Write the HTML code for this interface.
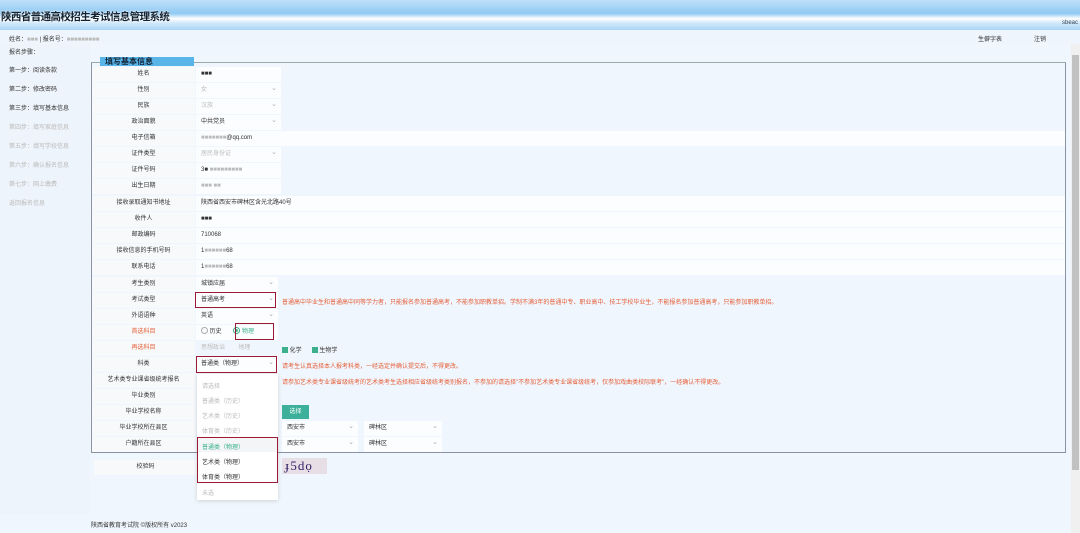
<!DOCTYPE html>
<html><head><meta charset="utf-8"><style>
*{margin:0;padding:0;box-sizing:border-box}
body{width:1080px;height:533px;overflow:hidden;background:#f0f6fd;font-family:"Liberation Sans","Noto Sans CJK SC",sans-serif;font-size:6px;color:#333;position:relative}
.a{position:absolute;white-space:nowrap}
.hdr{left:0;top:0;width:1080px;height:30px;background:linear-gradient(#bfe0fa 0%,#8fcaf3 45%,#ffffff 62%,#cfe7fa 78%,#a9d5f6 100%)}
.title{left:1px;top:9px;font-size:10.5px;font-weight:bold;color:#123;letter-spacing:-0.6px;text-shadow:0 0 1px #fff,0 0 2px #fff}
.side{left:0;top:44px;width:90px;height:470px;background:#eef4fb}
.row{position:absolute;left:92px;width:973px;height:16px}
.lab{position:absolute;left:0;width:103px;height:15px;background:#f7f9fb;text-align:center;line-height:15px}
.val{position:absolute;left:104px;height:15px;background:#fcfdfe;line-height:15px;padding-left:5px}
.sel:after{content:"⌄";position:absolute;right:4px;top:-2px;color:#aaa;font-size:7px}
.g{color:#bbb}
.red{color:#e5603a}
.rb{position:absolute;border:1.5px solid #9b1b35}
.sm{position:absolute;height:15px;background:#fcfdfe;line-height:15px;padding-left:5px}
</style></head><body>
<div class="a hdr"></div>
<div class="a title">陕西省普通高校招生考试信息管理系统</div>
<div class="a" style="right:2px;top:20px;font-size:6px;color:#345">sbeac</div>
<div class="a" style="left:0;top:30px;width:1080px;height:14px;background:#eef5fc"></div>
<div class="a" style="left:9px;top:34px">姓名：<span class="g">■■■</span> | 报名号：<span class="g">■■■■■■■■■</span></div>
<div class="a" style="left:978px;top:34px">生僻字表</div>
<div class="a" style="left:1034px;top:34px">注销</div>
<div class="a side"></div>
<div class="a" style="left:9px;top:47px">报名步骤：</div>
<div class="a" style="left:9px;top:65px">第一步：阅读条款</div>
<div class="a" style="left:9px;top:84px">第二步：修改密码</div>
<div class="a" style="left:9px;top:103px">第三步：填写基本信息</div>
<div class="a g" style="left:9px;top:122px">第四步：填写家庭信息</div>
<div class="a g" style="left:9px;top:141px">第五步：填写学校信息</div>
<div class="a g" style="left:9px;top:160px">第六步：确认报名信息</div>
<div class="a g" style="left:9px;top:179px">第七步：网上缴费</div>
<div class="a g" style="left:9px;top:198px">返回报名信息</div>
<div class="a" style="left:91px;top:62px;width:975px;height:391px;border:1px solid #8a93a3;border-top-color:#9aa"></div>
<div class="a" style="left:100px;top:57px;width:94px;height:9px;background:#59b4e8;color:#123;font-size:8px;font-weight:bold;line-height:9px;padding-left:5px">填写基本信息</div>

<div class="row" style="top:67px"><div class="lab">姓名</div><div class="val" style="width:85px">■■■</div></div>
<div class="row" style="top:83px"><div class="lab">性别</div><div class="val sel g" style="width:85px">女</div></div>
<div class="row" style="top:99px"><div class="lab">民族</div><div class="val sel g" style="width:85px">汉族</div></div>
<div class="row" style="top:115px"><div class="lab">政治面貌</div><div class="val sel" style="width:85px">中共党员</div></div>
<div class="row" style="top:131px"><div class="lab">电子信箱</div><div class="val" style="width:869px"><span class="g">■■■■■■■</span>@qq.com</div></div>
<div class="row" style="top:147px"><div class="lab">证件类型</div><div class="val sel g" style="width:85px">居民身份证</div></div>
<div class="row" style="top:163px"><div class="lab">证件号码</div><div class="val" style="width:85px">3■ <span class="g">■■■■■■■■■</span></div></div>
<div class="row" style="top:179px"><div class="lab">出生日期</div><div class="val g" style="width:85px">■■■ ■■</div></div>
<div class="row" style="top:196px"><div class="lab">接收录取通知书地址</div><div class="val" style="width:869px">陕西省西安市碑林区含光北路40号</div></div>
<div class="row" style="top:212px"><div class="lab">收件人</div><div class="val" style="width:869px">■■■</div></div>
<div class="row" style="top:228px"><div class="lab">邮政编码</div><div class="val" style="width:869px">710068</div></div>
<div class="row" style="top:244px"><div class="lab">接收信息的手机号码</div><div class="val" style="width:869px">1<span class="g">■■■■■■</span>68</div></div>
<div class="row" style="top:260px"><div class="lab">联系电话</div><div class="val" style="width:869px">1<span class="g">■■■■■■</span>68</div></div>
<div class="row" style="top:277px"><div class="lab">考生类别</div><div class="val sel" style="width:82px">城镇应届</div></div>
<div class="row" style="top:293px"><div class="lab">考试类型</div><div class="val sel" style="width:82px">普通高考</div><div class="a red" style="left:190px;top:4px">普通高中毕业生和普通高中同等学力者，只能报名参加普通高考，不能参加职教单招。学制不满3年的普通中专、职业高中、技工学校毕业生，不能报名参加普通高考，只能参加职教单招。</div></div>
<div class="row" style="top:309px"><div class="lab">外语语种</div><div class="val sel" style="width:82px">英语</div></div>
<div class="row" style="top:325px"><div class="lab red">首选科目</div><div class="val" style="width:82px"><span style="display:inline-block;width:7px;height:7px;border:1px solid #aaa;border-radius:50%;vertical-align:-1px"></span> 历史 &nbsp;&nbsp;&nbsp;&nbsp;&nbsp; <span style="display:inline-block;width:7px;height:7px;border:1px solid #3cb08a;border-radius:50%;vertical-align:-1px;background:radial-gradient(#3cb08a 35%,#fff 45%)"></span> <span style="color:#3cb08a">物理</span></div></div>
<div class="row" style="top:341px"><div class="lab red">再选科目</div><div class="val g" style="width:82px;background:none">思想政治 &nbsp;&nbsp;&nbsp;&nbsp;&nbsp;&nbsp; 地理</div><div class="a" style="left:190px;top:4px"><span style="display:inline-block;width:6px;height:6px;background:#3cb08a;vertical-align:-1px"></span> 化学 &nbsp;&nbsp;&nbsp;&nbsp; <span style="display:inline-block;width:6px;height:6px;background:#3cb08a;vertical-align:-1px"></span> 生物学</div></div>
<div class="row" style="top:357px"><div class="lab">科类</div><div class="val sel" style="width:82px">普通类（物理）</div><div class="a red" style="left:190px;top:4px">请考生认真选择本人报考科类，一经选定并确认提交后，不得更改。</div></div>
<div class="row" style="top:373px"><div class="lab">艺术类专业课省级统考报名</div><div class="a red" style="left:190px;top:4px">请参加艺术类专业课省级统考的艺术类考生选择相应省级统考类别报名，不参加的请选择"不参加艺术类专业课省级统考，仅参加戏曲类校际联考"，一经确认不得更改。</div></div>
<div class="row" style="top:389px"><div class="lab">毕业类别</div></div>
<div class="row" style="top:405px"><div class="lab">毕业学校名称</div><div class="a" style="left:190px;top:0;width:27px;height:14px;background:#3cb09a;color:#fff;text-align:center;line-height:14px">选择</div></div>
<div class="row" style="top:421px"><div class="lab">毕业学校所在县区</div><div class="sm sel" style="left:190px;width:76px">西安市</div><div class="sm sel" style="left:272px;width:78px">碑林区</div></div>
<div class="row" style="top:437px"><div class="lab">户籍所在县区</div><div class="sm sel" style="left:190px;width:76px">西安市</div><div class="sm sel" style="left:272px;width:78px">碑林区</div></div>
<div class="row" style="top:460px"><div class="lab" style="left:2px">校验码</div><div class="a" style="left:190px;top:-2px;width:45px;height:16px;background:#e8dfe6;color:#326;font-size:13px;font-family:'Liberation Serif',serif;line-height:16px;padding-left:3px;letter-spacing:1px">ɟ5dọ</div></div>

<div class="a" style="left:197px;top:374px;width:81px;height:126px;background:#fff;box-shadow:0 1px 4px rgba(0,0,0,.15)"></div>
<div class="a g" style="left:202px;top:381px">请选择</div>
<div class="a g" style="left:202px;top:396px">普通类（历史）</div>
<div class="a g" style="left:202px;top:411px">艺术类（历史）</div>
<div class="a g" style="left:202px;top:426px">体育类（历史）</div>
<div class="a" style="left:198px;top:438px;width:79px;height:14px;background:#f3f5f7"></div>
<div class="a" style="left:202px;top:442px;color:#3cb08a">普通类（物理）</div>
<div class="a" style="left:202px;top:457px">艺术类（物理）</div>
<div class="a" style="left:202px;top:472px">体育类（物理）</div>
<div class="a g" style="left:202px;top:488px">未选</div>

<div class="rb" style="left:195px;top:292px;width:81px;height:16px"></div>
<div class="rb" style="left:235px;top:323px;width:39px;height:17px"></div>
<div class="rb" style="left:196px;top:356px;width:81px;height:17px"></div>
<div class="rb" style="left:197px;top:437px;width:81px;height:46px"></div>

<div class="a" style="left:91px;top:520px">陕西省教育考试院 ©版权所有 v2023</div>
<div class="a" style="left:1071px;top:44px;width:9px;height:489px;background:#f0f0f0"></div>
<div class="a" style="left:1072px;top:55px;width:7px;height:415px;background:#c1c1c1"></div>
</body></html>
